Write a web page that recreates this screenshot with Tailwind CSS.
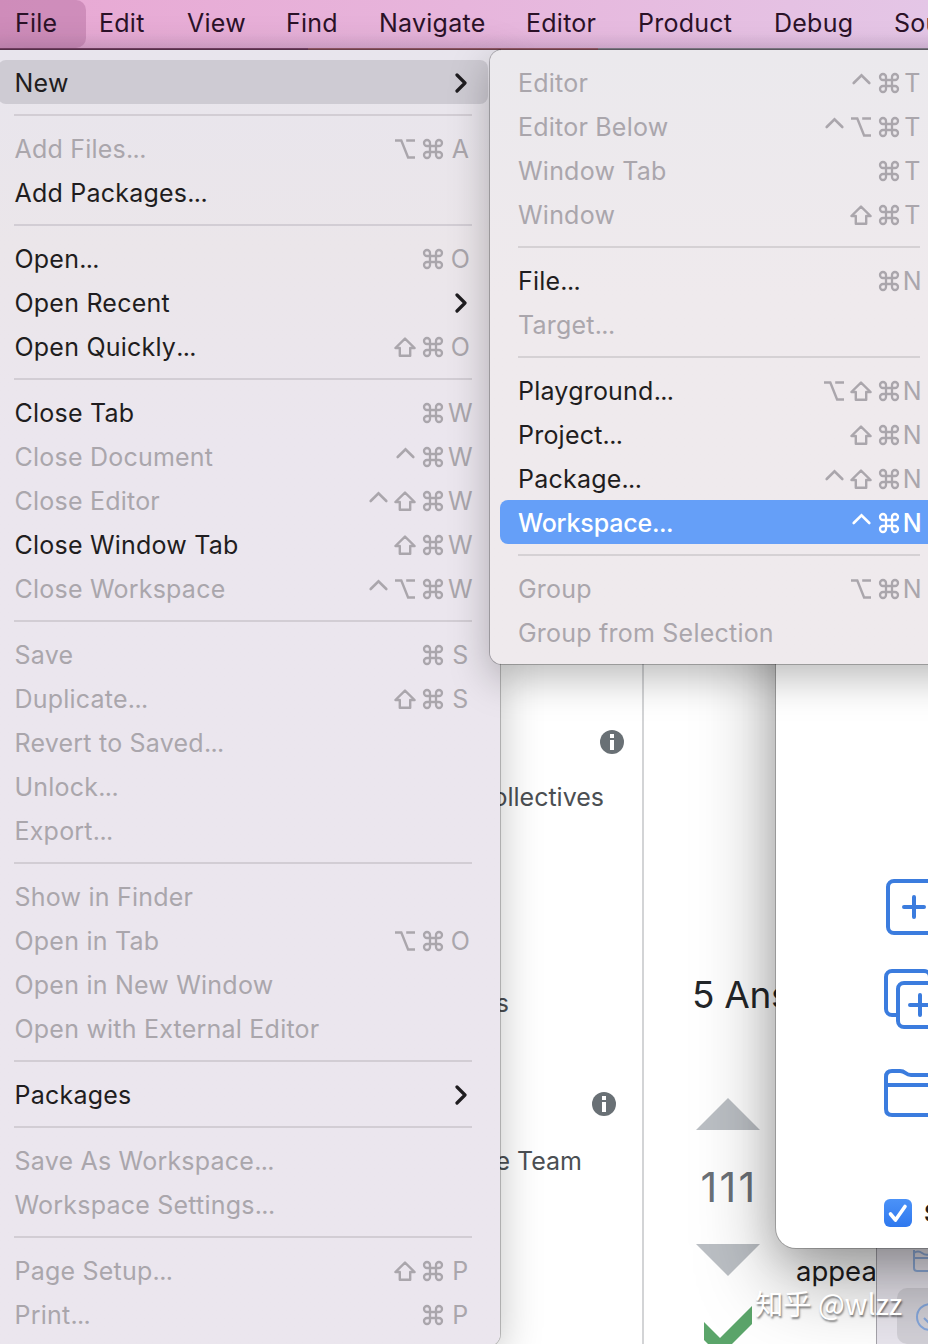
<!DOCTYPE html>
<html lang="en">
  <head>
    <meta charset="UTF-8" />
    <meta name="viewport" content="width=device-width, initial-scale=1.0" />
    <title>File menu</title>
    <script src="https://cdn.jsdelivr.net/npm/@tailwindcss/browser@4"></script>
  </head>
  <body class="relative w-[928px] h-[1344px] overflow-hidden bg-white font-[Inter,sans-serif] text-[25px] text-[#1f1d20]">
    <!-- Shared icons -->
    <svg class="hidden">
      <symbol id="cmd" viewBox="0 0 24 24">
        <path d="M15 6v12a3 3 0 1 0 3-3H6a3 3 0 1 0 3 3V6a3 3 0 1 0-3 3h12a3 3 0 1 0-3-3" fill="none" stroke="currentColor" stroke-width="2.3" />
      </symbol>
      <symbol id="shift" viewBox="0 0 24 24">
        <path d="M12 3.6 2.4 13h4.4v7.8h10.4V13h4.4z" fill="none" stroke="currentColor" stroke-width="2.4" stroke-linejoin="round" />
      </symbol>
      <symbol id="opt" viewBox="0 0 24 24">
        <path d="M2 3.500h6.3l6.8 17H22M13.2 3.500H22" fill="none" stroke="currentColor" stroke-width="2.4" />
      </symbol>
      <symbol id="ctrl" viewBox="0 0 24 24">
        <path d="M4.7 12 12.500 4.400l7.800 7.600" fill="none" stroke="currentColor" stroke-width="2.6" stroke-linecap="round" />
      </symbol>
      <symbol id="info" viewBox="0 0 24 24">
        <circle cx="12" cy="12" r="12" fill="#697075" />
        <path d="M10 4h4v4h-4zM10 10h4v10h-4z" fill="#fff" />
      </symbol>
    </svg>

    <!-- Browser page behind everything -->
    <div class="flex h-full">
      <div class="flex w-[644px] shrink-0 flex-col items-end border-r-2 border-[#d3d4d6] pt-[730px] text-[#4b4f53]">
        <svg class="mr-[18px] size-6"><use href="#info" /></svg>
        <p class="mt-[27px] mr-[38px] h-8 leading-8">Collectives</p>
        <p class="mt-[174px] mr-[133px] h-8 leading-8">Companies</p>
        <svg class="mt-[73px] mr-[26px] size-6"><use href="#info" /></svg>
        <p class="mt-[29px] mr-[60px] h-8 leading-8">Free Team</p>
      </div>
      <div class="flex-1 overflow-hidden pt-[970px]">
        <h2 class="ml-[48px] h-[50px] text-[37px] leading-[50px] tracking-[-0.3px] whitespace-nowrap text-[#232629]">5 Answers</h2>
        <div class="mt-[78px] ml-[52px] flex">
          <div class="flex w-16 shrink-0 flex-col items-center">
            <svg class="h-8 w-16 text-[#bbbfc4]" viewBox="0 0 64 32"><path d="M0 32 32 0l32 32z" fill="currentColor" /></svg>
            <span class="mt-[32px] h-[50px] pl-[2px] text-[41px] leading-[50px] tracking-[2.400px] text-[#6a7077]">111</span>
            <svg class="mt-[32px] h-8 w-16 text-[#bbbfc4]" viewBox="0 0 64 32"><path d="M0 0h64L32 32z" fill="currentColor" /></svg>
            <svg class="mt-[30px] h-[50px] w-12" viewBox="0 0 48 50"><path d="m0 16 16 16L48 0v18L16 50 0 34z" fill="#5ba56a" /></svg>
          </div>
          <p class="mt-[155px] ml-[36px] h-9 text-[27.500px] leading-9 whitespace-nowrap">appears</p>
        </div>
      </div>
    </div>

    <!-- Welcome window: recent projects panel and the main sheet -->
    <div class="absolute top-[600px] left-[876px] h-[800px] w-[400px] border-l border-[#a5a3aa] bg-[#e9e6ee] pt-[650px]">
      <svg class="ml-[36px] h-[22px] w-8 text-[#93b0de]" viewBox="0 0 32 22" fill="none" stroke="currentColor" stroke-width="2"><path d="M1 0v18q0 3 3 3h28M1 8h31M1 3q4-3 8 0t8 1h15" /></svg>
      <div class="mt-4 ml-5 h-[56px] rounded-[10px] bg-[#d3d1d8] pt-[13px] pl-[17px]">
        <svg class="size-8 text-[#86a8dd]" viewBox="0 0 32 32" fill="none" stroke="currentColor" stroke-width="2"><circle cx="16" cy="16" r="13" /><path d="M16 8v15m-6-6 6 6 6-6" /></svg>
      </div>
    </div>
    <div class="absolute top-[500px] left-[776px] h-[748px] w-[800px] rounded-[20px] bg-white pt-[379px] shadow-[0_0_0_1px_rgba(0,0,0,0.22),0_8px_36px_rgba(0,0,0,0.14),0_32px_80px_rgba(0,0,0,0.36)]">
      <svg class="ml-[108px] h-[58px] w-[64px] text-[#3b7cde]" viewBox="0 0 64 58" fill="none" stroke="currentColor" stroke-width="4" stroke-linecap="round"><rect x="4" y="2" width="54" height="52" rx="6" /><path d="M30 18v20M20 28h20" /></svg>
      <svg class="mt-[31px] ml-[108px] h-[62px] w-[64px] text-[#3b7cde]" viewBox="0 0 64 62" fill="none" stroke="currentColor" stroke-width="4" stroke-linecap="round"><rect x="2" y="3" width="44" height="44" rx="6" /><rect x="14" y="15" width="46" height="44" rx="6" fill="#fff" /><path d="M36 27v20M26 37h20" /></svg>
      <svg class="mt-[39px] ml-[108px] h-[50px] w-[64px] text-[#3b7cde]" viewBox="0 0 64 50" fill="none" stroke="currentColor" stroke-width="4"><path d="M2 17V8q0-6 6-6h8c6 0 5 4 11 4h35M2 16h60M2 16v24q0 6 6 6h54" /></svg>
      <div class="mt-[79px] ml-[108px] flex items-center gap-3">
        <span class="flex size-7 items-center justify-center rounded-[6px] bg-gradient-to-b from-[#4b92f8] to-[#2f78ee]">
          <svg class="size-7" viewBox="0 0 28 28" fill="none" stroke="#fff" stroke-width="3.600" stroke-linecap="round" stroke-linejoin="round"><path d="m6.500 15 5 6L21 7.500" /></svg>
        </span>
        <span class="pt-0.5 text-[24px] font-semibold leading-7 whitespace-nowrap">Show this window</span>
      </div>
    </div>

    <!-- Menu bar -->
    <div class="absolute inset-x-0 top-0 h-[50px] bg-gradient-to-r from-[#e8a8d3] via-[#e7b5dc] to-[#e4c6e6]">
      <div class="flex h-12 items-center bg-gradient-to-b from-transparent from-70% to-[#a080a8]/20 leading-[46px] tracking-[0.25px] whitespace-nowrap text-[#2b1228]">
        <span class="h-12 w-[86px] shrink-0 rounded-r-[10px] bg-[#a05a8c]/35 pl-[15px]">File</span>
        <span class="h-12 w-[89px] shrink-0 pl-[13px]">Edit</span>
        <span class="h-12 w-[99px] shrink-0 pl-[12px]">View</span>
        <span class="h-12 w-[92px] shrink-0 pl-[12px]">Find</span>
        <span class="h-12 w-[148px] shrink-0 pl-[13px]">Navigate</span>
        <span class="h-12 w-[112px] shrink-0 pl-[12px]">Editor</span>
        <span class="h-12 w-[136px] shrink-0 pl-[12px]">Product</span>
        <span class="h-12 w-[120px] shrink-0 pl-[12px]">Debug</span>
        <span class="h-12 shrink-0 pl-[12px]">Source Control</span>
      </div>
      <div class="flex h-0.5">
        <div class="w-[308px] bg-[#774266]"></div>
        <div class="w-[290px] bg-[#955a68]"></div>
        <div class="flex-1 bg-[#827c89]"></div>
      </div>
    </div>

    <!-- File menu -->
    <div class="absolute top-[50px] left-[-20px] h-[1296px] w-[520px] rounded-b-[12px] bg-gradient-to-b from-[#e8e5ed] via-[#ebe6ea] via-15% to-[#ebe6ee] to-30% pt-2.5 shadow-[0_0_0_1px_rgba(0,0,0,0.22),0_10px_44px_rgba(0,0,0,0.24)]">
      <div id="fileMenu"></div>
    </div>

    <!-- File > New submenu -->
    <div class="absolute top-[50px] left-[490px] h-[614px] w-[500px] rounded-[12px] bg-gradient-to-b from-[#ebe9ed] to-[#efeaed] to-40% pt-2.5 shadow-[0_0_0_1px_rgba(0,0,0,0.24),0_14px_40px_rgba(0,0,0,0.27)]">
      <div id="newMenu"></div>
    </div>

    <div class="absolute top-[1283px] left-[755px] font-['Noto_Sans_CJK_SC',sans-serif] text-[28.300px] leading-10 whitespace-nowrap text-white [text-shadow:1px_2px_2px_rgba(0,0,0,0.5)]">知乎 @wlzz</div>

    <script>
      // label, modifiers, key, state (on / off / sub / open / hot); null is a separator
      const fileItems = [
        ['New', '', '', 'open'],
        null,
        ['Add Files...', 'opt cmd', 'A', 'off'],
        ['Add Packages...', '', '', 'on'],
        null,
        ['Open...', 'cmd', 'O', 'on'],
        ['Open Recent', '', '', 'sub'],
        ['Open Quickly...', 'shift cmd', 'O', 'on'],
        null,
        ['Close Tab', 'cmd', 'W', 'on'],
        ['Close Document', 'ctrl cmd', 'W', 'off'],
        ['Close Editor', 'ctrl shift cmd', 'W', 'off'],
        ['Close Window Tab', 'shift cmd', 'W', 'on'],
        ['Close Workspace', 'ctrl opt cmd', 'W', 'off'],
        null,
        ['Save', 'cmd', 'S', 'off'],
        ['Duplicate...', 'shift cmd', 'S', 'off'],
        ['Revert to Saved...', '', '', 'off'],
        ['Unlock...', '', '', 'off'],
        ['Export...', '', '', 'off'],
        null,
        ['Show in Finder', '', '', 'off'],
        ['Open in Tab', 'opt cmd', 'O', 'off'],
        ['Open in New Window', '', '', 'off'],
        ['Open with External Editor', '', '', 'off'],
        null,
        ['Packages', '', '', 'sub'],
        null,
        ['Save As Workspace...', '', '', 'off'],
        ['Workspace Settings...', '', '', 'off'],
        null,
        ['Page Setup...', 'shift cmd', 'P', 'off'],
        ['Print...', 'cmd', 'P', 'off'],
      ]

      const newItems = [
        ['Editor', 'ctrl cmd', 'T', 'off'],
        ['Editor Below', 'ctrl opt cmd', 'T', 'off'],
        ['Window Tab', 'cmd', 'T', 'off'],
        ['Window', 'shift cmd', 'T', 'off'],
        null,
        ['File...', 'cmd', 'N', 'on'],
        ['Target...', '', '', 'off'],
        null,
        ['Playground...', 'opt shift cmd', 'N', 'on'],
        ['Project...', 'shift cmd', 'N', 'on'],
        ['Package...', 'ctrl shift cmd', 'N', 'on'],
        ['Workspace...', 'ctrl cmd', 'N', 'hot'],
        null,
        ['Group', 'opt cmd', 'N', 'off'],
        ['Group from Selection', '', '', 'off'],
      ]

      const fileStyle = {
        row: 'flex h-11 items-center pt-0.5 pl-[34.500px] pr-[26px]',
        open: 'ml-[18px] mr-[12px] flex h-11 items-center rounded-[8px] bg-[#cecbd3] pt-0.5 pl-[16.500px] pr-[14px]',
        line: 'mx-[34px] mr-[28px] h-0.5 bg-[#d2cdd4]',
        key: 'w-[27.500px] pt-0.5 text-center',
      }
      const newStyle = {
        row: 'ml-2.5 flex h-11 items-center rounded-l-[8px] pt-0.5 pl-[18px] pr-[68px]',
        line: 'ml-[28px] mr-[70px] h-0.5 bg-[#d5d1d4]',
        key: 'w-[19.500px] pt-0.5 text-center',
      }

      const chevron = '<svg class="mr-[5px] h-5 w-4" viewBox="0 0 16 20"><path d="m4 2 8 8-8 8" fill="none" stroke="currentColor" stroke-width="3.200" stroke-linecap="round" stroke-linejoin="round" /></svg>'

      function renderMenu(id, items, style) {
        document.getElementById(id).innerHTML = items.map((item) => {
          if (!item) return `<div class="flex h-[22px] flex-col justify-center"><div class="${style.line}"></div></div>`
          const [label, mods, key, state] = item
          const row = state === 'open' ? style.open : style.row
          const tone = state === 'off' ? 'text-[#aaa6ac]' : state === 'hot' ? 'bg-[#659ff8] text-white font-medium' : ''
          const keyTone = state === 'hot' ? 'text-white' : 'text-[#aaa6ac]'
          const tracking = state === 'hot' ? 'tracking-[-0.15px]' : 'tracking-[0.22px]'
          const text = label.replace('...', '<span class="tracking-[-0.600px]">...</span>')
          const icons = mods.split(' ').filter(Boolean)
            .map((m) => `<span class="flex w-[27.500px] justify-center pb-px"><svg class="size-6"><use href="#${m}" /></svg></span>`).join('')
          const right = state === 'sub' || state === 'open'
            ? chevron
            : `<span class="flex items-center ${keyTone}">${icons}<span class="${style.key}">${key}</span></span>`
          return `<div class="${row} ${tone}"><span class="flex-1 pt-0.5 whitespace-nowrap ${tracking}">${text}</span>${right}</div>`
        }).join('')
      }

      renderMenu('fileMenu', fileItems, fileStyle)
      renderMenu('newMenu', newItems, newStyle)
    </script>
  </body>
</html>
